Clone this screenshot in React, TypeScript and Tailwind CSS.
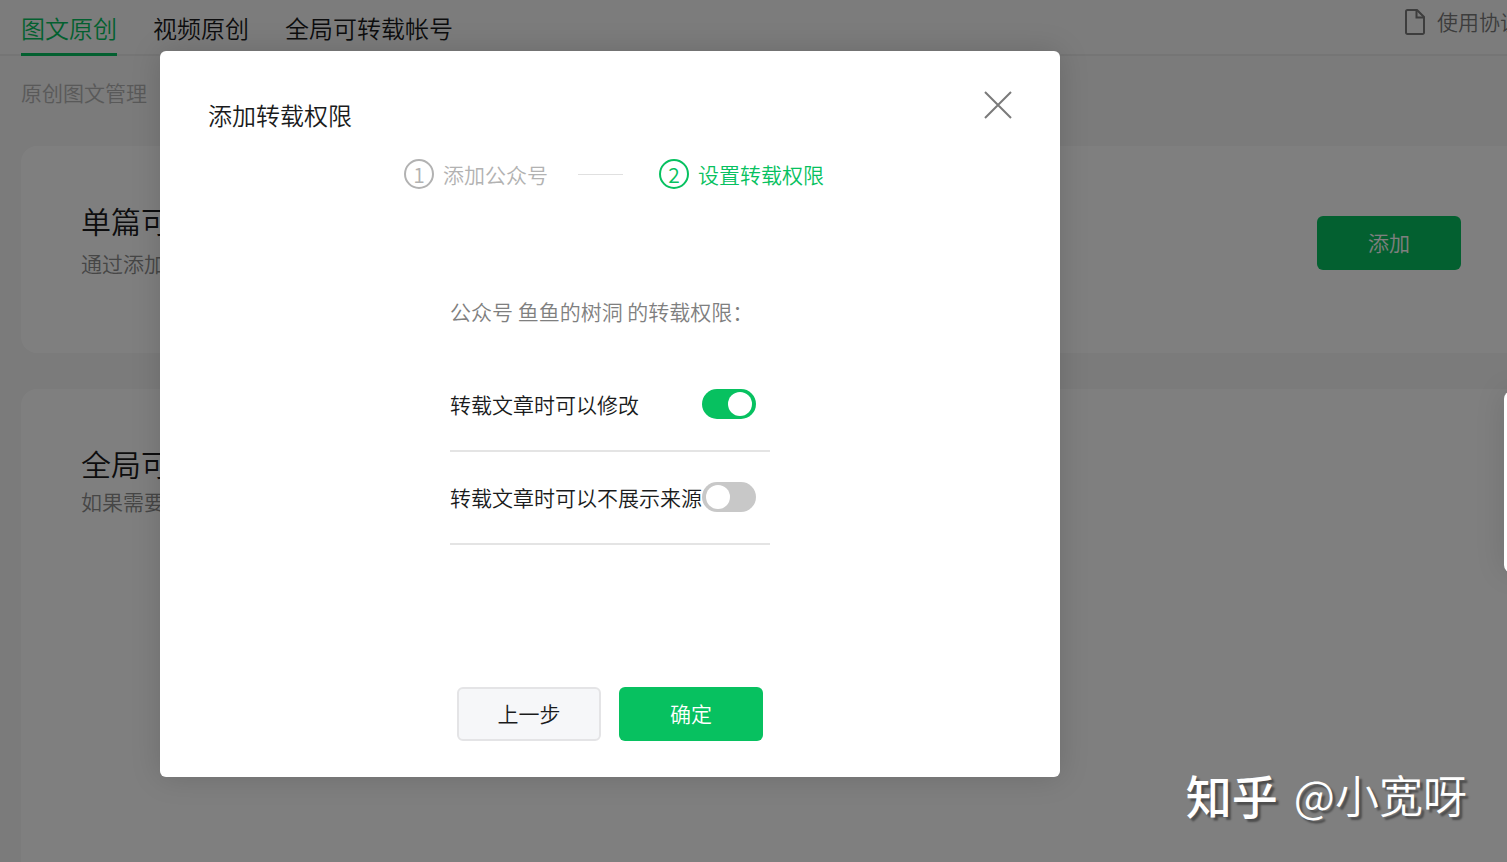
import React, { useState } from "react";

const TABS = [
  { key: "article", label: "图文原创", active: true },
  { key: "video", label: "视频原创", active: false },
  { key: "global", label: "全局可转载帐号", active: false },
];

const Header = () => {
  return (
    <header className="flex h-14 items-stretch justify-between border-b-2 border-[#eaeaea] bg-[#f9f9f9] pl-[21px]">
      <nav className="flex gap-9">
        {TABS.map((tab) => (
          <a
            href="#"
            key={tab.key}
            className={
              tab.active
                ? "h-14 border-b-3 border-[#07c160] pt-2.5 text-2xl leading-9 whitespace-nowrap text-[#07c160]"
                : "h-14 pt-2.5 text-2xl leading-9 whitespace-nowrap text-[#1a1b1c]"
            }
          >
            {tab.label}
          </a>
        ))}
      </nav>
      <a
        href="#"
        className="-mr-3.5 flex h-11 items-center gap-3 text-[21px] whitespace-nowrap text-[#7a7a7a]"
      >
        <svg width="20" height="26" viewBox="0 0 20 26" fill="none" stroke="currentColor" strokeWidth="2">
          <path d="M2.5 1H12L19 8V23.5A1.5 1.5 0 0 1 17.5 25H2.5A1.5 1.5 0 0 1 1 23.5V2.5A1.5 1.5 0 0 1 2.5 1Z" />
          <path d="M11.5 1V8.5H19" />
        </svg>
        使用协议
      </a>
    </header>
  );
};

const Page = () => {
  return (
    <div className="flex min-h-screen flex-col bg-[#f6f6f6]">
      <Header />
      <main className="flex grow flex-col pl-[21px]">
        <h1 className="pt-5 text-[21px] leading-8 text-[#b2b2b2]">原创图文管理</h1>
        <section className="mt-[38px] flex min-h-[207px] justify-between rounded-l-2xl bg-white pt-[52px] pr-[46px] pl-[60px]">
          <div>
            <h2 className="text-3xl leading-[44px] text-[#1a1b1c]">单篇可</h2>
            <p className="text-[21px] leading-[42px] text-[#8c8c8c]">通过添加</p>
          </div>
          <button
            type="button"
            className="mt-[18px] h-[54px] w-36 rounded-md bg-[#07c160] text-[21px] text-white"
          >
            添加
          </button>
        </section>
        <section className="mt-9 grow rounded-tl-2xl bg-white pt-[52px] pl-[60px]">
          <h2 className="text-3xl leading-[44px] text-[#1a1b1c]">全局可</h2>
          <p className="text-[21px] leading-8 text-[#8c8c8c]">如果需要</p>
        </section>
      </main>
    </div>
  );
};

type SwitchRowProps = {
  id: string;
  label: string;
  defaultOn: boolean;
};

const SwitchRow = ({ id, label, defaultOn }: SwitchRowProps) => {
  const [on, setOn] = useState(defaultOn);

  return (
    <div className="flex h-[93px] items-center justify-between border-b-2 border-[#e4e4e4] pr-3.5 pb-0.5">
      <label htmlFor={id} className="text-[21px] leading-8 whitespace-nowrap text-[#1a1b1c]">
        {label}
      </label>
      <input
        id={id}
        type="checkbox"
        role="switch"
        checked={on}
        onChange={() => setOn(!on)}
        className="flex h-[30px] w-[54px] shrink-0 appearance-none items-center rounded-full bg-[#c8c8c8] px-1 before:block before:size-6 before:rounded-full before:bg-white before:content-[''] checked:justify-end checked:bg-[#07c160]"
      />
    </div>
  );
};

const Modal = () => {
  return (
    <div
      role="dialog"
      aria-labelledby="dialog-title"
      className="w-[900px] rounded-md bg-white px-12 pt-10 pb-9 shadow-[0_0_30px_rgba(0,0,0,0.15)]"
    >
      <div className="flex items-start justify-between">
        <h3 id="dialog-title" className="mt-1.5 text-2xl leading-9 text-[#1a1b1c]">
          添加转载权限
        </h3>
        <button type="button" aria-label="关闭" className="text-[#7a7a7a]">
          <svg width="28" height="28" viewBox="0 0 28 28" fill="none" stroke="currentColor" strokeWidth="2">
            <path d="M1 1L27 27M27 1L1 27" />
          </svg>
        </button>
      </div>

      {/* STEPS */}
      <ol className="mt-[26px] flex items-center justify-center pl-2 text-[21px] leading-[28px]">
        <li className="flex items-center gap-[9px] text-[#b2b2b2]">
          <span className="flex size-[30px] items-center justify-center rounded-full border-2 border-current">
            1
          </span>
          添加公众号
        </li>
        <li aria-hidden="true" className="mr-9 ml-[30px] h-px w-[45px] bg-[#e0e0e0]" />
        <li className="flex items-center gap-[9px] text-[#07c160]">
          <span className="flex size-[30px] items-center justify-center rounded-full border-2 border-current">
            2
          </span>
          设置转载权限
        </li>
      </ol>

      <div className="mx-auto mt-[106px] w-80">
        <p className="text-[21px] leading-8 whitespace-nowrap text-[#7f7f7f]">
          公众号 鱼鱼的树洞 的转载权限：
        </p>
        <div className="mt-8">
          <SwitchRow id="can-edit" label="转载文章时可以修改" defaultOn={true} />
          <SwitchRow id="hide-source" label="转载文章时可以不展示来源" defaultOn={false} />
        </div>
      </div>

      <div className="mt-[142px] flex justify-center gap-[18px] text-[21px]">
        <button
          type="button"
          className="h-[54px] w-36 rounded-md border-2 border-[#e4e4e6] bg-[#f6f7f9] text-[#1a1b1c]"
        >
          上一步
        </button>
        <button type="button" className="h-[54px] w-36 rounded-md bg-[#07c160] text-white">
          确定
        </button>
      </div>
    </div>
  );
};

const App = () => {
  return (
    <div className="relative overflow-hidden font-['Noto_Sans_CJK_SC',sans-serif] font-[350]">
      <Page />
      <div className="absolute inset-0 bg-black/50 pt-[51px] pl-40">
        <Modal />
      </div>
      {/* side toolbar, mostly off screen */}
      <div className="absolute top-[391px] -right-5 h-[182px] w-[23px] rounded-lg bg-white shadow-[0_0_30px_rgba(0,0,0,0.12)]" />
      <div className="absolute right-10 bottom-9 flex items-center gap-4 text-[44px] leading-[64px] text-white [text-shadow:3px_3px_2px_rgba(0,0,0,0.4)]">
        <span className="text-[46px] font-medium">知乎</span>
        <span>@小宽呀</span>
      </div>
    </div>
  );
};

export default App;
